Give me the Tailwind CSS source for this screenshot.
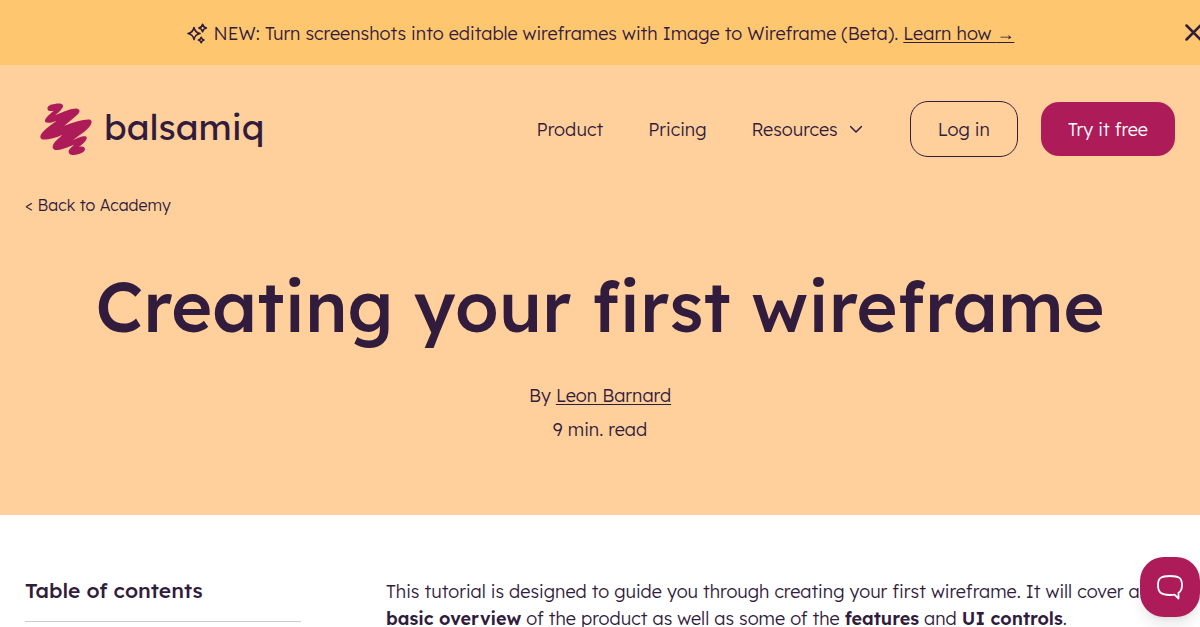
<!DOCTYPE html>
<html lang="en">

<head>
    <meta charset="UTF-8" />
    <meta name="viewport" content="width=device-width, initial-scale=1.0" />
    <!-- Tailwind CSS -->
    <script src="https://cdn.jsdelivr.net/npm/@tailwindcss/browser@4"></script>
    <title>Creating your first wireframe | Balsamiq</title>
</head>

<body class="bg-white font-['Lexend','Inter',sans-serif] font-light text-[18px] text-[#321c3d] overflow-x-hidden">

    <!-- Announcement bar -->
    <div class="relative flex items-center justify-center h-[65px] pt-0.5 bg-[#ffc670]">
        <p class="flex items-center gap-1.5 whitespace-nowrap">
            <svg class="size-[22px]" viewBox="0 0 22 22" fill="none" stroke="currentColor" stroke-width="1.6" stroke-linejoin="round">
                <path d="M8 4.500q1 5 6 6q-5 1-6 6q-1-5-6-6q5-1 6-6z" />
                <path d="M16.600 1.200q.7 3.100 3.800 3.800q-3.100.7-3.800 3.800q-.7-3.100-3.800-3.800q3.100-.7 3.800-3.800z" />
                <path d="M15.200 14.200q.6 2.200 2.800 2.800q-2.200.6-2.800 2.800q-.6-2.200-2.800-2.800q2.200-.6 2.800-2.800z" />
            </svg>
            <span>NEW: Turn screenshots into editable wireframes with Image to Wireframe (Beta).
                <a href="#" class="underline underline-offset-2">Learn how <span class="font-['Liberation_Sans',sans-serif]">→</span></a></span>
        </p>
        <button type="button" aria-label="Close" class="absolute top-6 -right-0.5">
            <svg class="size-[17px]" viewBox="0 0 17 17" fill="none" stroke="currentColor" stroke-width="2.500" stroke-linecap="round">
                <path d="M1.500 1.500l14 14M15.500 1.500l-14 14" />
            </svg>
        </button>
    </div>

    <!-- Hero -->
    <section class="bg-[#ffd09b] px-[25px] pt-9 pb-17">
        <header class="flex items-center justify-between">
            <a href="#" class="flex items-center gap-3 pl-[15px]">
                <svg class="size-[52px]" viewBox="0 0 156 156" fill="#ad1c59">
                    <path d="M23 20C20 10 30 4 44 3C56 1 67 1 69 8C70 15 60 24 46 37C68 27 98 15 112 17C122 20 120 28 110 37C100 47 86 57 73 68C98 58 138 46 151 50C159 56 154 66 142 78C130 90 112 101 96 113C112 104 133 97 139 101C144 108 134 119 116 132C126 129 134 131 135 138C135 148 118 154 102 156C90 157 83 150 87 141C90 135 96 131 102 125C80 134 58 142 46 141C35 138 36 129 44 118C50 111 58 104 67 96C48 104 18 112 6 109C-3 103 1 94 12 83C22 73 36 63 50 53C38 58 22 62 16 57C12 50 20 41 41 23C34 25 26 25 23 20Z" />
                </svg>
                <span class="pb-1 text-[36px] leading-[44px] font-normal">balsamiq</span>
            </a>
            <nav class="flex items-center">
                <a href="#" class="mr-[45px]">Product</a>
                <a href="#" class="mr-[45px]">Pricing</a>
                <button type="button" class="flex items-center gap-3 mr-12">Resources
                    <svg class="w-3 h-2" viewBox="0 0 12 8" fill="none" stroke="currentColor" stroke-width="1.500" stroke-linecap="round" stroke-linejoin="round">
                        <path d="M.5 1.500L6 7l5.500-5.500" />
                    </svg>
                </button>
                <a href="#" class="flex items-center h-14 px-[27px] mr-[23px] border border-[#321c3d] rounded-[18px]">Log in</a>
                <a href="#" class="flex items-center h-[54px] px-[27px] bg-[#ad1c59] text-white rounded-[18px]">Try it free</a>
            </nav>
        </header>
        <a href="#" class="inline-block mt-9 text-[16px] leading-6">&lt; Back to Academy</a>
        <h1 class="mt-11 text-center text-[70px] leading-[88px] font-medium">Creating your first wireframe</h1>
        <div class="mt-[29px] text-center leading-[34px]">
            <p>By <a href="#" class="underline underline-offset-2">Leon Barnard</a></p>
            <p>9 min. read</p>
        </div>
    </section>

    <!-- Article -->
    <main class="flex gap-[85px] px-[25px] pt-[60px]">
        <aside class="w-[276px] shrink-0">
            <h2 class="pb-4 border-b border-[#cccccc] text-[21px] leading-[30px] font-medium">Table of contents</h2>
        </aside>
        <article class="flex-1 min-w-0 pt-[3px] leading-[27px]">
            <p>This tutorial is designed to guide you through creating your first wireframe. It will cover a <strong class="font-semibold">basic overview</strong> of the product as well as some of the <strong class="font-semibold">features</strong> and <strong class="font-semibold">UI controls</strong>.</p>
        </article>
    </main>

    <!-- Chat launcher -->
    <button type="button" aria-label="Open chat" class="fixed right-0 bottom-[10px] flex items-center justify-center size-[60px] rounded-[24px] bg-[#ad1c59] text-white shadow-lg">
        <svg class="size-7" viewBox="0 0 28 28" fill="none" stroke="currentColor" stroke-width="1.800" stroke-linejoin="round">
            <path d="M14 3C5 3 2 5 2 12C2 19.500 5 22 14 22C16 22 17.500 22 18.500 21.700L22.500 25.500L22.500 19.800C25 18.500 26 16 26 12C26 5 23 3 14 3Z" />
        </svg>
    </button>
</body>

</html>
